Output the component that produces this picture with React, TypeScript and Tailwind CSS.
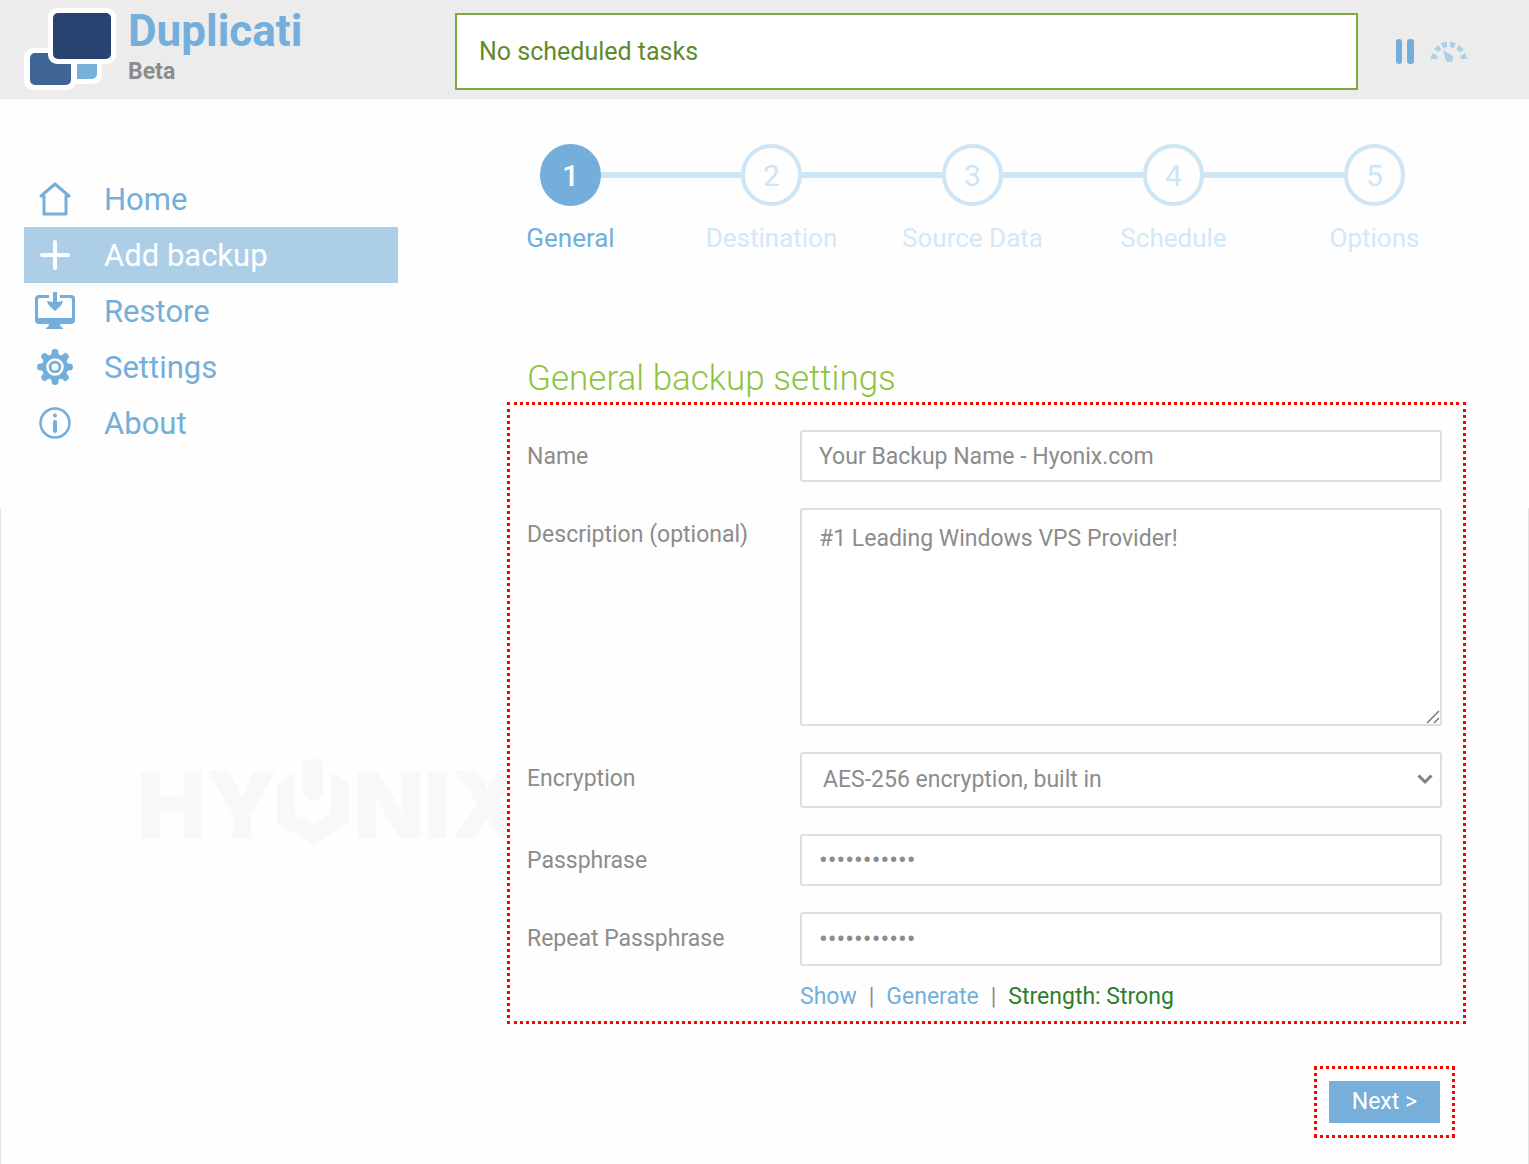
import { useState } from 'react'
import type { ReactNode } from 'react'

const steps = ['General', 'Destination', 'Source Data', 'Schedule', 'Options']

const fieldClass = 'block w-full rounded-[3px] border-2 border-[#dedede] bg-white leading-7 text-[#8c8c8c] outline-none'

function Logo() {
  return (
    <svg width="92" height="82" viewBox="0 0 92 82" aria-hidden="true">
      <g fill="#fff">
        <rect x="0" y="40" width="52" height="42" rx="9" />
        <rect x="40" y="46" width="38" height="30" rx="9" />
      </g>
      <rect x="6" y="45" width="41" height="32" rx="5" fill="#3e6595" />
      <path d="M53 56h20v10a5 5 0 0 1-5 5H53z" fill="#77b0db" />
      <rect x="24" y="0" width="68" height="56" rx="9" fill="#fff" />
      <rect x="29" y="5" width="58" height="46" rx="5" fill="#28436f" />
    </svg>
  )
}

function PauseIcon() {
  return (
    <svg width="18" height="25" viewBox="0 0 18 25" fill="#74aeda" aria-hidden="true">
      <rect width="6" height="25" rx="3" />
      <rect x="11" width="7" height="25" rx="3" />
    </svg>
  )
}

function ThrottleIcon() {
  return (
    <svg width="38" height="21" viewBox="0 0 38 21" fill="#add0e9" aria-hidden="true">
      <path d="M0 18l2.500-6 5 3-.5 3z" />
      <path d="M4 8l4-4 3.500 4.500L8 11z" />
      <path d="M11 2l6-1.500v5.500l-3.500 1.500z" />
      <path d="M20 .5l6 1.500-2.500 5.500L20 6z" />
      <path d="M29 4l5 4.500-4 3-3.500-3z" />
      <path d="M35 12l2.500 6h-6.500l-.5-3z" />
      <path d="M13 9l7.500 4.500a4 4 0 1 1-5 5z" />
    </svg>
  )
}

function HomeIcon() {
  return (
    <svg width="32" height="34" viewBox="0 0 32 34" fill="none" stroke="currentColor" strokeWidth="3" strokeLinejoin="round" strokeLinecap="round" aria-hidden="true">
      <path d="M5 14H2L16 2l14 12h-3v18H5z" />
    </svg>
  )
}

function PlusIcon() {
  return (
    <svg width="30" height="30" viewBox="0 0 30 30" stroke="currentColor" strokeWidth="4" strokeLinecap="round" aria-hidden="true">
      <path d="M15 2v26M2 15h26" />
    </svg>
  )
}

function RestoreIcon() {
  return (
    <svg width="40" height="38" viewBox="0 0 40 38" fill="currentColor" aria-hidden="true">
      <path d="M14 3H4a4 4 0 0 0-4 4v21a4 4 0 0 0 4 4h10c0 2-1 3-3 4v1h17v-1c-2-1-3-2-3-4h11a4 4 0 0 0 4-4V7a4 4 0 0 0-4-4H25v3h10a2 2 0 0 1 2 2v18H3V8a2 2 0 0 1 2-2h9z" />
      <path d="M18 0h4v10c2 0 4-1 6-1-1 5-5 7-8 10-3-3-7-5-8-10 2 0 4 1 6 1z" />
    </svg>
  )
}

function GearIcon() {
  return (
    <svg width="36" height="36" viewBox="0 0 36 36" aria-hidden="true">
      <g fill="currentColor">
        <circle cx="18" cy="18" r="13" />
        {[0, 45, 90, 135, 180, 225, 270, 315].map((angle) => (
          <path key={angle} d="M14 7l1-6q3-2 6 0l1 6z" transform={`rotate(${angle} 18 18)`} />
        ))}
      </g>
      <circle cx="18" cy="18" r="7.500" fill="none" stroke="#fefefe" strokeWidth="2.500" />
      <circle cx="18" cy="18" r="3.500" fill="#fefefe" />
    </svg>
  )
}

function InfoIcon() {
  return (
    <svg width="32" height="32" viewBox="0 0 32 32" fill="none" stroke="currentColor" aria-hidden="true">
      <circle cx="16" cy="16" r="14.500" strokeWidth="2.500" />
      <path d="M16 15v9" strokeWidth="4" strokeLinecap="round" />
      <circle cx="16" cy="8.500" r="2" fill="currentColor" stroke="none" />
    </svg>
  )
}

function Watermark() {
  return (
    <div className="flex w-[362px] items-center text-[92px] leading-[120px] font-black text-[#f9f7f8] select-none" style={{ fontFamily: 'Inter, sans-serif' }} aria-hidden="true">
      <span className="pt-2">HY</span>
      <svg width="72" height="88" viewBox="0 0 72 88" fill="currentColor" className="shrink-0">
        <path d="M26 5l10-5 10 5v34l-10 6-10-6z" />
        <path d="M18 16v41l18 10 18-10V16l18 10v40L36 88 0 66V26z" />
      </svg>
      <span className="pt-2 pl-1">NIX</span>
    </div>
  )
}

const menu = [
  { label: 'Home', icon: <HomeIcon /> },
  { label: 'Add backup', icon: <PlusIcon />, active: true },
  { label: 'Restore', icon: <RestoreIcon /> },
  { label: 'Settings', icon: <GearIcon /> },
  { label: 'About', icon: <InfoIcon /> },
]

function Row({ label, id, children }: { label: string; id: string; children: ReactNode }) {
  return (
    <div className="flex items-start">
      <label htmlFor={id} className="w-[273px] shrink-0 pt-[13px] text-[23px] leading-7 text-[#8c8c8c]">{label}</label>
      <div className="relative min-w-0 flex-1">{children}</div>
    </div>
  )
}

export default function App() {
  const [name, setName] = useState('Your Backup Name - Hyonix.com')
  const [description, setDescription] = useState('#1 Leading Windows VPS Provider!')
  const [passphrase, setPassphrase] = useState('hyonixvps01')
  const [repeat, setRepeat] = useState('hyonixvps01')
  const [visible, setVisible] = useState(false)

  return (
    <div className="relative min-h-screen bg-[#fefefe] pb-[26px]" style={{ fontFamily: 'Roboto, sans-serif' }}>
      <div className="pointer-events-none absolute inset-x-0 top-[508px] bottom-0 border-x border-[#e4e4e4]" />

      <header className="flex h-[99px] bg-[#ececec]">
        <div className="flex w-[455px] shrink-0 items-start gap-3 pt-2 pl-6">
          <Logo />
          <div>
            <h1 className="text-[44px] leading-[46px] font-bold text-[#74aeda]">Duplicati</h1>
            <p className="text-[23px] leading-9 font-bold text-[#8c8c8c]">Beta</p>
          </div>
        </div>
        <div className="mt-[13px] flex h-[77px] flex-1 items-center border-2 border-[#80a83a] bg-white px-[22px] text-[25px] text-[#5f8a2f]">
          No scheduled tasks
        </div>
        <div className="flex w-[171px] shrink-0 items-center gap-4 pt-1 pl-[38px]">
          <button type="button" aria-label="Pause"><PauseIcon /></button>
          <button type="button" aria-label="Throttle"><ThrottleIcon /></button>
        </div>
      </header>

      <div className="flex">
        <aside className="w-[470px] shrink-0 pt-[72px]">
          <nav className="mr-[72px] ml-6">
            {menu.map((item) => (
              <a key={item.label} href="#" className={item.active ? 'flex h-14 items-center bg-[#adcee7] text-[31px] text-white' : 'flex h-14 items-center text-[31px] text-[#74aeda]'}>
                <span className="mr-[19px] flex w-[61px] justify-center">{item.icon}</span>
                <span className="pt-[2px]">{item.label}</span>
              </a>
            ))}
          </nav>
          <div className="mt-[286px] ml-[137px]">
            <Watermark />
          </div>
        </aside>

        <main className="mr-[54px] min-w-0 flex-1 pt-[45px]">
          <ol className="grid grid-cols-5">
            {steps.map((step, i) => (
              <li key={step} className="flex flex-col items-center">
                <div className="flex w-full items-center">
                  <span className={i === 0 ? 'h-[6px] flex-1' : 'h-[6px] flex-1 bg-[#cde5f5]'} />
                  <span className={i === 0 ? 'flex h-[62px] w-[61px] items-center justify-center rounded-full bg-[#74aeda] text-[30px] font-medium text-white' : 'flex h-[62px] w-[61px] items-center justify-center rounded-full border-4 border-[#cde5f5] text-[30px] text-[#cde5f5]'}>
                    {i + 1}
                  </span>
                  <span className={i === steps.length - 1 ? 'h-[6px] flex-1' : 'h-[6px] flex-1 bg-[#cde5f5]'} />
                </div>
                <span className={i === 0 ? 'mt-4 text-[26px] leading-8 text-[#74aeda]' : 'mt-4 text-[26px] leading-8 text-[#d3e8f6]'}>{step}</span>
              </li>
            ))}
          </ol>

          <form className="mr-[9px] ml-[37px]" onSubmit={(event) => event.preventDefault()}>
            <h2 className="mt-[103px] pl-5 text-[35px] leading-[44px] font-light text-[#8fc33f]">General backup settings</h2>

            <div className="relative mt-px flex flex-col gap-[26px] border-3 border-dotted border-[#ff0000] bg-[#fefefe] pt-[25px] pr-[21px] pb-[10px] pl-[17px]">
              <Row label="Name" id="name">
                <input id="name" value={name} onChange={(event) => setName(event.target.value)} className={`${fieldClass} h-[52px] px-[17px] text-[23px]`} />
              </Row>
              <Row label="Description (optional)" id="description">
                <textarea id="description" value={description} onChange={(event) => setDescription(event.target.value)} className={`${fieldClass} h-[218px] resize-none px-[17px] py-[15px] text-[23px]`} />
                <svg width="14" height="14" viewBox="0 0 14 14" stroke="#777" strokeWidth="1.500" className="pointer-events-none absolute right-[2px] bottom-[2px]" aria-hidden="true">
                  <path d="M1 13L13 1M8 13l5-5" />
                </svg>
              </Row>
              <Row label="Encryption" id="encryption">
                <select id="encryption" className={`${fieldClass} h-14 appearance-none px-[21px] text-[23px]`}>
                  <option>AES-256 encryption, built in</option>
                  <option>No encryption</option>
                </select>
                <svg width="16" height="11" viewBox="0 0 16 11" fill="none" stroke="#808080" strokeWidth="3" className="pointer-events-none absolute top-[22px] right-[9px]" aria-hidden="true">
                  <path d="M1.500 1.500L8 8l6.500-6.500" />
                </svg>
              </Row>
              <Row label="Passphrase" id="passphrase">
                <input id="passphrase" type={visible ? 'text' : 'password'} value={passphrase} onChange={(event) => setPassphrase(event.target.value)} className={`${fieldClass} h-[52px] px-[17px] text-[26px]`} />
              </Row>
              <Row label="Repeat Passphrase" id="repeat">
                <input id="repeat" type={visible ? 'text' : 'password'} value={repeat} onChange={(event) => setRepeat(event.target.value)} className={`${fieldClass} h-[54px] px-[17px] text-[26px]`} />
                <p className="mt-[17px] flex gap-3 text-[23px] leading-7 text-[#8c8c8c]">
                  <a href="#" className="text-[#74aeda]" onClick={() => setVisible(!visible)}>Show</a>
                  <span>|</span>
                  <a href="#" className="text-[#74aeda]">Generate</a>
                  <span>|</span>
                  <span className="text-[#2e7d2e]">Strength: Strong</span>
                </p>
              </Row>
            </div>

            <div className="mt-[42px] mr-[11px] ml-auto w-fit border-3 border-dotted border-[#ff0000] p-3">
              <button type="submit" className="block h-[42px] bg-[#78aeda] px-[23px] text-[23px] text-white">Next &gt;</button>
            </div>
          </form>
        </main>
      </div>
    </div>
  )
}
